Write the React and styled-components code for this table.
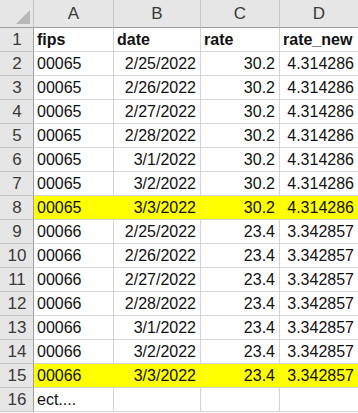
import React from "react";
import styled, { createGlobalStyle } from "styled-components";

const Global = createGlobalStyle`
  html, body { margin: 0; padding: 0; background: #ffffff; }
  body { font-family: "Liberation Sans", Arial, sans-serif; overflow: hidden; }
`;

const Sheet = styled.div`
  display: grid;
  grid-template-columns: 34px 80px 87px 79px 79px;
  grid-template-rows: 28px repeat(16, 24px);
  width: 358px;
  height: 413px;
  overflow: hidden;
  background: #ffffff;
  font-size: 16px;
  color: #1a1a1a;
`;

const Corner = styled.div`
  position: relative;
  background: #e6e6e6;
  border-right: 1px solid #c4c4c4;
  border-bottom: 1px solid #9e9e9e;
  box-sizing: border-box;
  &::after {
    content: "";
    position: absolute;
    right: 3px;
    bottom: 3px;
    width: 0;
    height: 0;
    border-left: 14px solid transparent;
    border-bottom: 14px solid #b8b8b8;
  }
`;

const ColHead = styled.div`
  background: #e6e6e6;
  border-right: 1px solid #c8c8c8;
  border-bottom: 1px solid #9e9e9e;
  box-sizing: border-box;
  display: flex;
  align-items: center;
  justify-content: center;
  color: #3a3a3a;
  font-size: 17px;
  padding-top: 1px;
`;

const RowHead = styled.div`
  background: #e6e6e6;
  border-right: 1px solid #9e9e9e;
  border-bottom: 1px solid #c8c8c8;
  box-sizing: border-box;
  display: flex;
  align-items: center;
  justify-content: center;
  color: #3a3a3a;
  font-size: 17px;
  padding-left: 1px;
`;

const Cell = styled.div`
  background: ${(p) => (p.$hl ? "#ffff00" : "#ffffff")};
  border-right: 1px solid ${(p) => (p.$hl ? "#ffff00" : "#d4d4d4")};
  border-bottom: 1px solid #d4d4d4;
  box-sizing: border-box;
  display: flex;
  align-items: center;
  justify-content: ${(p) => (p.$right ? "flex-end" : "flex-start")};
  padding: 1px 4px 0 3px;
  font-weight: ${(p) => (p.$bold ? 700 : 400)};
  white-space: nowrap;
  overflow: visible;
  color: #111111;
`;

const rows = [
  ["00065", "2/25/2022", "30.2", "4.314286"],
  ["00065", "2/26/2022", "30.2", "4.314286"],
  ["00065", "2/27/2022", "30.2", "4.314286"],
  ["00065", "2/28/2022", "30.2", "4.314286"],
  ["00065", "3/1/2022", "30.2", "4.314286"],
  ["00065", "3/2/2022", "30.2", "4.314286"],
  ["00065", "3/3/2022", "30.2", "4.314286", true],
  ["00066", "2/25/2022", "23.4", "3.342857"],
  ["00066", "2/26/2022", "23.4", "3.342857"],
  ["00066", "2/27/2022", "23.4", "3.342857"],
  ["00066", "2/28/2022", "23.4", "3.342857"],
  ["00066", "3/1/2022", "23.4", "3.342857"],
  ["00066", "3/2/2022", "23.4", "3.342857"],
  ["00066", "3/3/2022", "23.4", "3.342857", true],
];

export default function App() {
  return (
    <>
      <Global />
      <Sheet>
        <Corner />
        {["A", "B", "C", "D"].map((c) => (
          <ColHead key={c}>{c}</ColHead>
        ))}

        <RowHead>1</RowHead>
        <Cell $bold>fips</Cell>
        <Cell $bold>date</Cell>
        <Cell $bold>rate</Cell>
        <Cell $bold>rate_new</Cell>

        {rows.map((r, i) => (
          <React.Fragment key={i}>
            <RowHead>{i + 2}</RowHead>
            <Cell $hl={r[4]}>{r[0]}</Cell>
            <Cell $hl={r[4]} $right>{r[1]}</Cell>
            <Cell $hl={r[4]} $right>{r[2]}</Cell>
            <Cell $hl={r[4]} $right>{r[3]}</Cell>
          </React.Fragment>
        ))}

        <RowHead>16</RowHead>
        <Cell>ect....</Cell>
        <Cell />
        <Cell />
        <Cell />
      </Sheet>
    </>
  );
}
